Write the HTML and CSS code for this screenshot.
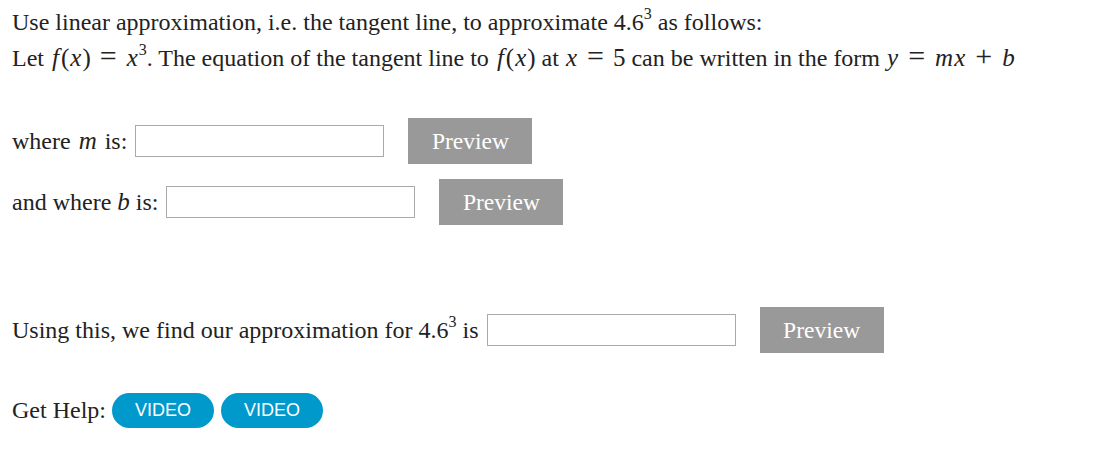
FILE: index.html
```html
<!DOCTYPE html>
<html lang="en">
<head>
    <meta charset="UTF-8">
    <title>Linear approximation</title>
    <link rel="stylesheet" href="styles.css">
</head>
<body>
    <div class="problem">
        <p class="intro">
            Use linear approximation, i.e. the tangent line, to approximate <span class="num">4.6<sup>3</sup></span> as follows:<br>
            Let <span class="math"><i class="f">f</i>(<i>x</i>)<span class="op">=</span><i>x</i><sup>3</sup></span>. The equation of the tangent line to <span class="math"><i class="f">f</i>(<i>x</i>)</span> at <span class="math"><i>x</i><span class="op">=</span>5</span> can be written in the form <span class="math"><i>y</i><span class="op">=</span><i class="m">m</i><i>x</i><span class="op">+</span><i>b</i></span>
        </p>

        <!-- answers -->
        <div class="answer-row first">
            <span>where <i class="var">m</i> is:</span>
            <input type="text" class="answer">
            <button class="preview">Preview</button>
        </div>
        <div class="answer-row">
            <span>and where <i class="var b">b</i> is:</span>
            <input type="text" class="answer">
            <button class="preview">Preview</button>
        </div>
        <div class="answer-row final">
            <span>Using this, we find our approximation for <span class="num">4.6<sup>3</sup></span> is</span>
            <input type="text" class="answer">
            <button class="preview">Preview</button>
        </div>

        <div class="help">
            <span>Get Help:</span>
            <a href="#" class="video-btn">VIDEO</a>
            <a href="#" class="video-btn">VIDEO</a>
        </div>
    </div>
</body>
</html>
```

FILE: styles.css
```css
body {
    margin: 0;
    background: #fff;
    color: #222;
    font-family: "Liberation Serif", "Times New Roman", serif;
    font-size: 24px;
}
.problem {
    padding: 4px 12px;
}
.intro {
    margin: 0;
    line-height: 36px;
}
.math {
    font-size: 25px;
    line-height: 0;
}
.math i, .var {
    font-family: "Liberation Serif", serif;
    font-style: italic;
    padding: 0 1px;
}
.var {
    font-size: 25px;
    padding: 0 2px;
}
.var.b {
    padding: 0;
}
.math i.f {
    padding: 0 2px;
}
.math i.m {
    padding: 0 0 0 1px;
}
.op {
    font-size: 30px;
    margin: 0 9px;
}
sup {
    font-size: 16px;
    line-height: 0;
    vertical-align: 11px;
}
.answer-row {
    display: flex;
    align-items: center;
    height: 46px;
    margin-top: 15px;
}
.answer-row.first {
    margin-top: 42px;
}
.answer-row.final {
    margin-top: 82px;
}
.answer {
    width: 249px;
    height: 32px;
    box-sizing: border-box;
    margin-left: 8px;
    border: 1px solid #aaa;
    padding: 2px 4px;
}
.preview {
    width: 124px;
    height: 46px;
    margin-left: 24px;
    border: none;
    background: #999;
    color: #fff;
    font-family: "Liberation Serif", "Times New Roman", serif;
    font-size: 23.5px;
}
.help {
    display: flex;
    align-items: center;
    gap: 7px;
    margin-top: 40px;
}
.help span {
    margin-right: -1px;
}
.video-btn {
    display: inline-block;
    width: 102px;
    height: 35px;
    line-height: 35px;
    border-radius: 18px;
    background: #0099cc;
    color: #fff;
    text-align: center;
    text-decoration: none;
    font-family: "Liberation Sans", Arial, sans-serif;
    font-size: 18px;
}
```
